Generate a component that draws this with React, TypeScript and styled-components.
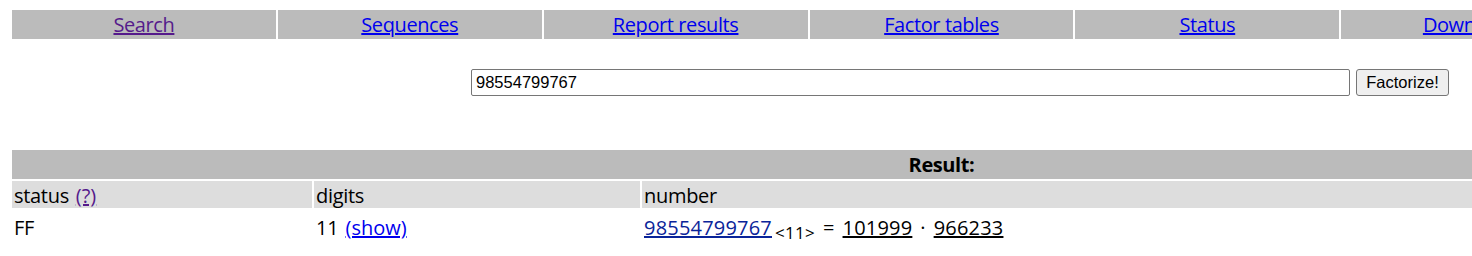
import React from 'react';
import styled, {createGlobalStyle} from 'styled-components';

const GlobalStyle = createGlobalStyle`
  html {
    overflow: hidden;
    background: #ffffff;
  }
  body {
    margin: 0;
    font-family: "Open Sans", "Noto Sans", sans-serif;
    font-size: 20px;
    color: #000000;
    overflow: hidden;
  }
`

const Page = styled.div`
  width: 1904px;
  padding: 8px;
`

const NavBar = styled.nav`
  display: grid;
  grid-template-columns: repeat(7, 1fr);
  column-gap: 2px;
  width: 1859px;
  margin: 2px 0 0 4px;
`

const NavCell = styled.div`
  background: #bbbbbb;
  text-align: center;
  line-height: 27px;
  padding: 1px;
  white-space: nowrap;
  overflow: hidden;
`

const NavLink = styled.a<{visited?: boolean}>`
  color: ${(p) => (p.visited ? '#551a8b' : '#0000ee')};
  text-decoration: underline;
  letter-spacing: -0.4px;
`

const SearchForm = styled.form`
  display: flex;
  justify-content: center;
  align-items: center;
  gap: 6px;
  margin-top: 30px;
`

const NumberInput = styled.input`
  box-sizing: border-box;
  width: 879px;
  height: 27px;
  border: 1px solid #767676;
  border-radius: 2px;
  padding: 1px 4px;
  font-family: "Liberation Sans", Arial, sans-serif;
  font-size: 16.5px;
  color: #000000;
  outline: none;
`

const SubmitButton = styled.button`
  box-sizing: border-box;
  width: 93px;
  height: 27px;
  padding: 0;
  border: 1px solid #767676;
  border-radius: 3px;
  background: #efefef;
  font-family: "Liberation Sans", Arial, sans-serif;
  font-size: 16.5px;
  color: #000000;
`

const ResultTable = styled.div`
  display: grid;
  grid-template-columns: 300px 326px 1fr;
  gap: 2px;
  width: 1859px;
  margin: 54px 0 0 4px;
`

const TitleCell = styled.div`
  grid-column: 1 / -1;
  background: #bbbbbb;
  text-align: center;
  font-weight: bold;
  line-height: 27px;
  padding: 1px;
  letter-spacing: -0.4px;
`

const HeadCell = styled.div`
  background: #dddddd;
  line-height: 26px;
  padding: 2px 1px 0 2px;
  height: 27px;
  box-sizing: border-box;
  letter-spacing: -0.3px;
`

const DataCell = styled.div`
  line-height: 28px;
  padding: 4px 2px 0;
  white-space: nowrap;
`

const CellText = styled.span`
  letter-spacing: -0.3px;
`

const SmallLink = styled.a<{visited?: boolean}>`
  color: ${(p) => (p.visited ? '#551a8b' : '#0000ee')};
  text-decoration: underline;
  letter-spacing: 0;
  margin-left: 2px;
`

const NumberLink = styled.a<{tone: string}>`
  color: ${(p) => p.tone};
  text-decoration: underline;
  letter-spacing: 0.2px;
`

const Sub = styled.sub`
  font-size: 17px;
  vertical-align: -4px;
  line-height: 0;
  margin-left: 3px;
  letter-spacing: 0.3px;
`

const Op = styled.span`
  margin: 0 8px;
`

const navItems = ['Search', 'Sequences', 'Report results', 'Factor tables', 'Status', 'Downloads', 'Login'];

const App = () => {
  return (
    <Page>
      <GlobalStyle />
      <NavBar>
        {navItems.map((item, i) => (
          <NavCell key={item}>
            <NavLink href="#" visited={i === 0}>{item}</NavLink>
          </NavCell>
        ))}
      </NavBar>
      <SearchForm onSubmit={(e) => e.preventDefault()}>
        <NumberInput type="text" defaultValue="98554799767" />
        <SubmitButton type="submit">Factorize!</SubmitButton>
      </SearchForm>
      <ResultTable>
        <TitleCell>Result:</TitleCell>
        <HeadCell>status <SmallLink href="#" visited>(?)</SmallLink></HeadCell>
        <HeadCell>digits</HeadCell>
        <HeadCell>number</HeadCell>
        <DataCell><CellText>FF</CellText></DataCell>
        <DataCell><CellText>11</CellText> <SmallLink href="#">(show)</SmallLink></DataCell>
        <DataCell>
          <NumberLink href="#" tone="#0a2499">98554799767</NumberLink>
          <Sub>&lt;11&gt;</Sub>
          <Op>=</Op>
          <NumberLink href="#" tone="#000000">101999</NumberLink>
          <Op>·</Op>
          <NumberLink href="#" tone="#000000">966233</NumberLink>
        </DataCell>
      </ResultTable>
    </Page>
  );
};

export default App;
